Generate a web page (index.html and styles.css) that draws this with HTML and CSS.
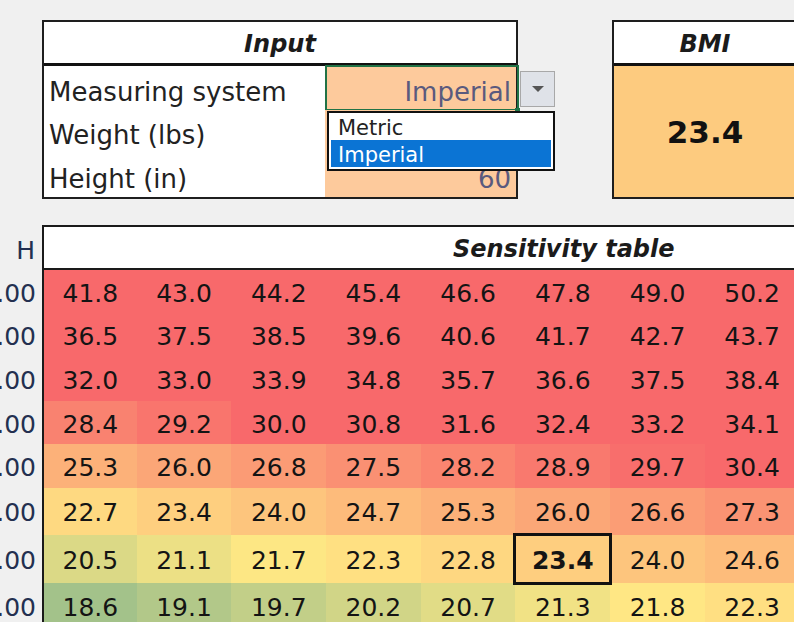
FILE: index.html
```html
<!DOCTYPE html>
<html lang="en">
<head>
    <meta charset="UTF-8">
    <meta name="viewport" content="width=device-width, initial-scale=1.0">
    <title>BMI Calculator</title>
    <link rel="stylesheet" href="styles.css">
</head>
<body>
    <div class="sheet">
        <!-- Input and result boxes -->
        <div class="top-row">
            <div class="panel input-panel">
                <div class="panel-title">Input</div>
                <div class="input-grid">
                    <div class="label">Measuring system</div>
                    <div class="value selected">Imperial
                        <span class="drop-btn"></span>
                        <ul class="drop-list">
                            <li>Metric</li>
                            <li class="active">Imperial</li>
                        </ul>
                    </div>
                    <div class="label">Weight (lbs)</div>
                    <div class="value">120</div>
                    <div class="label">Height (in)</div>
                    <div class="value">60</div>
                </div>
            </div>
            <div class="panel bmi-panel">
                <div class="panel-title">BMI</div>
                <div class="bmi-value">23.4</div>
            </div>
        </div>

        <!-- Sensitivity table -->
        <div class="sens-grid" id="sens-grid">
            <div class="corner">H</div>
            <div class="sens-title">Sensitivity table</div>
        </div>
    </div>

    <script>
        const heights = [42, 45, 48, 51, 54, 57, 60, 63];
        const weights = [];
        for (let w = 105; w <= 135; w += 3) weights.push(w);

        const red = [248, 105, 107];
        const yellow = [255, 232, 132];
        const green = [163, 194, 138];

        function mix(a, b, t) {
            return 'rgb(' + a.map((c, i) => Math.round(c + (b[i] - c) * t)).join(',') + ')';
        }

        function colorFor(v) {
            if (v >= 21.75) return mix(yellow, red, Math.min((v - 21.75) / 8.25, 1));
            return mix(yellow, green, Math.min((21.75 - v) / 3.15, 1));
        }

        const grid = document.getElementById('sens-grid');
        heights.forEach(h => {
            const label = document.createElement('div');
            label.className = 'row-label';
            label.innerHTML = `<span>${h.toFixed(2)}</span>`;
            grid.appendChild(label);

            weights.forEach((w, i) => {
                const bmi = 703 * w / (h * h);
                const cell = document.createElement('div');
                cell.className = 'cell' + (i === 0 ? ' first' : '') + (h === 60 && w === 120 ? ' current' : '');
                cell.style.background = colorFor(bmi);
                cell.textContent = bmi.toFixed(1);
                grid.appendChild(cell);
            });
        });
    </script>
</body>
</html>
```
FILE: styles.css
```css
html, body {
    overflow: hidden;
}
body {
    margin: 0;
    background-color: #f0f0f0;
    font-family: "DejaVu Sans", Lato, sans-serif;
    color: #1b1b1b;
}
.sheet {
    width: 1200px;
    padding-top: 20px;
}
.top-row {
    display: flex;
    align-items: flex-start;
    gap: 94px;
    padding-left: 42px;
}
.panel {
    display: flex;
    flex-direction: column;
    height: 179px;
    background-color: #fff;
    border: 2px solid #1e1e1e;
    box-sizing: border-box;
}
.input-panel {
    width: 476px;
}
.bmi-panel {
    width: 186px;
}
.panel-title {
    display: flex;
    align-items: center;
    justify-content: center;
    height: 44px;
    padding-top: 2px;
    border-bottom: 3px solid #111;
    box-sizing: border-box;
    font-size: 24px;
    font-weight: 700;
    font-style: italic;
}
.input-grid {
    flex: 1;
    display: grid;
    grid-template-columns: 281px 1fr;
    grid-template-rows: repeat(3, 1fr);
}
.label {
    display: flex;
    align-items: center;
    padding: 8px 0 0 5px;
    font-size: 26px;
    color: #222;
}
.value {
    position: relative;
    display: flex;
    align-items: center;
    justify-content: flex-end;
    padding: 8px 5px 0 0;
    background-color: #fdca9c;
    color: #5a5a7e;
    font-size: 26px;
}
.selected::after {
    content: "";
    position: absolute;
    top: -1px;
    right: -3px;
    bottom: -1px;
    left: 0;
    border: 2px solid #217346;
}
.selected::before {
    content: "";
    position: absolute;
    right: -4px;
    bottom: -3px;
    width: 5px;
    height: 5px;
    background-color: #217346;
    z-index: 1;
}
.drop-btn {
    position: absolute;
    left: calc(100% + 4px);
    top: 5px;
    width: 35px;
    height: 36px;
    background-color: #dfe2e8;
    border: 1px solid #a8a8a8;
    box-sizing: border-box;
}
.drop-btn::after {
    content: "";
    position: absolute;
    left: 11px;
    top: 14px;
    border-left: 6px solid transparent;
    border-right: 6px solid transparent;
    border-top: 6px solid #555;
}
.drop-list {
    position: absolute;
    top: calc(100% + 1px);
    left: 2px;
    z-index: 2;
    width: 228px;
    margin: 0;
    padding: 0 2px 2px;
    list-style: none;
    background-color: #fff;
    border: 2px solid #111;
    box-sizing: border-box;
    color: #222;
    font-size: 21px;
}
.drop-list li {
    height: 27px;
    line-height: 30px;
    padding-left: 7px;
}
.drop-list .active {
    background-color: #0b74d4;
    color: #fff;
}
.bmi-value {
    flex: 1;
    display: flex;
    align-items: center;
    justify-content: center;
    background-color: #fdcb7f;
    font-size: 31px;
    font-weight: 700;
    color: #111;
}
.sens-grid {
    display: grid;
    grid-template-columns: 42px repeat(11, 94.7px);
    grid-template-rows: 45px repeat(5, 43.6px) 47px 48px 47px;
    margin-top: 26px;
}
.corner {
    display: flex;
    align-items: center;
    justify-content: flex-end;
    padding: 6px 7px 0 0;
    color: #233050;
    font-size: 25px;
}
.sens-title {
    grid-column: span 11;
    display: flex;
    align-items: center;
    justify-content: center;
    padding-top: 2px;
    background-color: #fff;
    border: 2px solid #1a1a1a;
    border-right: none;
    font-size: 24px;
    font-weight: 700;
    font-style: italic;
}
.row-label {
    display: flex;
    align-items: center;
    justify-content: flex-end;
    padding: 3px 6px 0 0;
    color: #233050;
    font-size: 25px;
}
.cell {
    display: flex;
    align-items: center;
    justify-content: center;
    padding-top: 3px;
    color: #141414;
    font-size: 25px;
}
.cell.first {
    border-left: 2px solid #1a1a1a;
}
.cell.current {
    position: relative;
    outline: 3px solid #111;
    outline-offset: -1px;
    font-weight: 700;
}
```
